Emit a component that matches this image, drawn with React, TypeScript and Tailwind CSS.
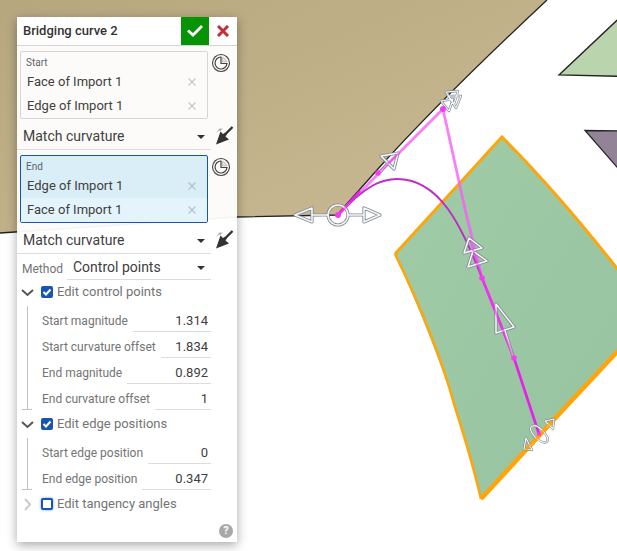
import { useState } from "react";
import type { ReactNode } from "react";

function Viewport() {
  return (
    <svg className="absolute inset-0 size-full" aria-hidden="true" fill="none">
      <defs>
        <linearGradient id="tan" x1="0" y1="0" x2="1" y2="1">
          <stop offset="0" stopColor="#b6a77f" />
          <stop offset="1" stopColor="#cabb94" />
        </linearGradient>
        <linearGradient id="green" x1="0" y1="0" x2="1" y2="1">
          <stop offset="0" stopColor="#9fcca7" />
          <stop offset="1" stopColor="#98c2a0" />
        </linearGradient>
      </defs>
      <path d="M0 0H547Q440 100 377 170L337 215L237 217L0 233Z" fill="url(#tan)" />
      <path d="M547 0Q440 100 377 170L337 215L237 217L0 233" stroke="#222" strokeWidth="1.3" />
      <path d="M630 8L559 75L630 76.500Z" fill="#bad5ae" stroke="#222" strokeWidth="1.3" />
      <path d="M630 131L585 130.500L630 182Z" fill="#938396" stroke="#222" strokeWidth="1.3" />
      <path d="M502 137Q562 197 630 285V338L548 426L481 499Q461 404 395 254Z" fill="url(#green)" />
      <path d="M395 254L502 137Q562 197 630 285" stroke="#ffa50a" strokeWidth="3" />
      <path d="M395 254Q436 338 454 404Q472 460 481 499" stroke="#ffa50a" strokeWidth="2.500" />
      <path d="M630 338L548 426L481 499" stroke="#ffa50a" strokeWidth="4.500" />

      <path d="M338 215L379 173L443 109L465 209L482 278" stroke="#f95cf9" strokeOpacity=".8" strokeWidth="2.800" />
      <path d="M338 215C366 185 382 179 397 179C439 179 461 224 482 278" stroke="#c12bc6" strokeWidth="2" />
      <path d="M482 278L514 358L539 434" stroke="#ea1eea" strokeWidth="2.600" />
      <path d="M338 215L360 191" stroke="#e52ae5" strokeWidth="2.500" />
      <Manipulators className="stroke-[#828b95]" width={3.2} />
      <Manipulators className="stroke-[#f8f9fa]" width={1.5} />
      <path d="M338 215L350 203M482 278L514 358M380 171L399 153M470 240L482 278" stroke="#f53cf5" strokeOpacity=".6" strokeWidth="2.200" />
      <path d="M526 450L552 422" stroke="#ffa50a" strokeOpacity=".75" strokeWidth="3" />
      <g fill="#f53cf5">
        <circle cx="338" cy="215" r="3" />
        <circle cx="378" cy="173" r="2.800" />
        <circle cx="443" cy="109" r="3" />
        <circle cx="482" cy="278" r="2.800" />
        <circle cx="514" cy="358" r="2.800" />
        <circle cx="539" cy="434" r="2" />
      </g>
    </svg>
  );
}

function Manipulators({ className, width }: { className: string; width: number }) {
  return (
    <g className={className} strokeWidth={width} strokeLinejoin="round">
      <circle cx="338" cy="215" r="10" />
      <path d="M328 215H312M312 208V222L295 215ZM348 215H364M364 208V222L380 215Z" />
      <path d="M381 156L398 153L394 169ZM380 172L388 163" />
      <path d="M446 92L458 91L454 104ZM448 96L461 96L456 108ZM441 101L453 99L449 111Z" strokeWidth={width * 0.75} />
      <path d="M469 238L464 253L482 248ZM473 251L468 267L487 261Z" />
      <path d="M496 304L496 333L514 327ZM505 331L513 356" />
      <path d="M531 427Q535 423 542 430Q550 438 547 442Q542 444 535 437Q529 430 531 427Z" strokeWidth={width * 0.75} />
      <path d="M545 421L554 419L553 429ZM526 438L524 449L532 450ZM534 443L529 447M546 428L550 424" strokeWidth={width * 0.75} />
    </g>
  );
}

function ClockIcon() {
  return (
    <svg width="20" height="20" viewBox="0 0 20 20" fill="none" stroke="#444">
      <circle cx="10" cy="10" r="8.500" strokeWidth="1.100" />
      <path d="M10 4A6 6 0 1 0 16 10.500H10Z" strokeWidth="1.200" />
      <path d="M11.500 4.200A6 6 0 0 1 15.800 9H11.500Z" fill="#e2e2e2" stroke="#aaa" strokeWidth=".6" />
    </svg>
  );
}

function FlipIcon() {
  return (
    <svg width="20" height="20" viewBox="0 0 20 20">
      <path d="M2 8L6 3L7 4L9 3L6.500 6L5.500 5.500Z" fill="#aaa" />
      <path d="M18.500 2L11 9.500" stroke="#333" strokeWidth="2.400" />
      <path d="M2 19.500L6.500 6.500L9 9L11 7.800L12.800 9.600L11.500 11.500L15 14.500Z" fill="#333" />
    </svg>
  );
}

function Selection({ label, items, active }: { label: string; items: string[]; active?: boolean }) {
  return (
    <div className="flex gap-1 pl-[3px]">
      <section
        aria-label={label}
        className={`w-[188px] rounded-xs border ${active ? "border-[#1855b2] bg-[#daeef7]" : "border-[#d6d6d4]"}`}
      >
        <h2 className="h-[18px] px-[5px] pt-1 text-[10px] leading-[14px] text-[#5d6469]">{label}</h2>
        <ul>
          {items.map((item, i) => (
            <li
              key={item}
              className={`flex h-6 items-center justify-between pr-2.5 pl-1.5 text-[13px] ${active && i > 0 ? "bg-[#e4f4fc]" : ""}`}
            >
              <span>{item}</span>
              <button type="button" aria-label={`Remove ${item}`} className={active ? "text-[#b4c4cc]" : "text-[#c8c8c8]"}>
                <svg width="10" height="10" viewBox="0 0 10 10" stroke="currentColor" strokeWidth="1.300">
                  <path d="M1.500 1.500L8.500 8.500M8.500 1.500L1.500 8.500" />
                </svg>
              </button>
            </li>
          ))}
        </ul>
      </section>
      <button type="button" aria-label={`${label} history`} className="mt-0.5 -ml-px size-5">
        <ClockIcon />
      </button>
    </div>
  );
}

function Dropdown({ label, options }: { label: string; options: string[] }) {
  return (
    <div className="relative flex-1 border-b border-[#dcdcdc]">
      <select aria-label={label} className="size-full appearance-none bg-transparent px-1.5 outline-none">
        {options.map((o) => (
          <option key={o}>{o}</option>
        ))}
      </select>
      <svg className="pointer-events-none absolute top-1/2 right-1.5 -mt-px" width="8" height="4" viewBox="0 0 8 4">
        <path d="M0 0H8L4 4Z" fill="#333" />
      </svg>
    </div>
  );
}

function MatchRow({ label }: { label: string }) {
  return (
    <div className="flex h-[31px] pt-[3px] pr-[3px]">
      <Dropdown label={label} options={["Match curvature", "Match tangent", "Match position"]} />
      <button type="button" aria-label={`${label} flip`} className="mt-[3px] ml-[3px] size-5">
        <FlipIcon />
      </button>
    </div>
  );
}

function Group({ id, label, initial, children }: { id: string; label: string; initial: boolean; children?: ReactNode }) {
  const [on, setOn] = useState(initial);
  return (
    <div>
      <div className="flex h-7 items-center pl-1">
        <svg width="13" height="13" viewBox="0 0 13 13" fill="none" strokeWidth="2" className={on ? "stroke-[#555]" : "stroke-[#ccc]"}>
          <path d={on ? "M1 4L6.500 9L12 4" : "M4 1L9 6.500L4 12"} />
        </svg>
        <span className="relative ml-[7px] size-3">
          <input
            id={id}
            type="checkbox"
            checked={on}
            onChange={() => setOn(!on)}
            className="block size-3 appearance-none rounded-xs border-2 border-[#1855b2] bg-white not-checked:shadow-[0_0_3px_#73a2ed] checked:bg-[#1855b2]"
          />
          {on && (
            <svg className="pointer-events-none absolute inset-0" width="12" height="12" viewBox="0 0 12 12" fill="none" stroke="#fff" strokeWidth="2">
              <path d="M2.500 6L5 8.500L9.500 3.500" />
            </svg>
          )}
        </span>
        <label htmlFor={id} className="ml-1 text-[13px] text-[#747474]">{label}</label>
      </div>
      {on && children}
    </div>
  );
}

function Fields({ rows }: { rows: [string, string][] }) {
  return (
    <div className="flex pl-[5px]">
      <div className="flex w-2.5 justify-center border-b border-[#c2c2c2]">
        <div className="w-px bg-[#c2c2c2]" />
      </div>
      <div className="flex-1 pr-[26px] pl-2.5">
        {rows.map(([label, value]) => (
          <div key={label} className="flex h-[26px] gap-[5px]">
            <label htmlFor={label} className="pt-1 text-xs leading-[22px] text-[#747474]">{label}</label>
            <input
              id={label}
              defaultValue={value}
              className="w-0 flex-1 border-b border-[#dcdcdc] bg-transparent pt-[5px] pr-[3px] text-right text-[13px] outline-none"
            />
          </div>
        ))}
      </div>
    </div>
  );
}

export default function App() {
  return (
    <main className="relative min-h-screen overflow-hidden bg-white p-[17px] pb-2 font-[Roboto,sans-serif] text-sm text-[#404040]">
      <Viewport />
      <form className="relative w-[220px] bg-white/95 pb-0.5 shadow-[0_3px_10px_rgba(0,0,0,0.35)]">
        <header className="flex h-[29px] items-stretch border-b border-[#d4d4d4] bg-white">
          <h1 className="flex-1 pl-1.5 text-[13px] leading-7 font-medium text-[#333]">Bridging curve 2</h1>
          <button type="button" aria-label="Accept" className="flex w-7 items-center justify-center bg-[#069306]">
            <svg width="16" height="12" viewBox="0 0 16 12" fill="none" stroke="#fff" strokeWidth="2.800">
              <path d="M1 5.500L6 10L15 1" />
            </svg>
          </button>
          <button type="button" aria-label="Cancel" className="flex w-7 items-center justify-center">
            <svg width="12" height="12" viewBox="0 0 12 12" stroke="#c62d35" strokeWidth="3">
              <path d="M1 1L11 11M11 1L1 11" />
            </svg>
          </button>
        </header>
        <div className="pt-[5px]">
          <Selection label="Start" items={["Face of Import 1", "Edge of Import 1"]} />
          <MatchRow label="Start condition" />
        </div>
        <div className="pt-[5px]">
          <Selection label="End" items={["Edge of Import 1", "Face of Import 1"]} active />
          <MatchRow label="End condition" />
        </div>
        <div className="flex h-[26px] pr-[26px] pl-[5px]">
          <span className="w-[45px] pt-1 text-xs leading-[22px] text-[#747474]">Method</span>
          <Dropdown label="Method" options={["Control points", "Magnitude"]} />
        </div>
        <div className="-mt-0.5">
          <Group id="control-points" label="Edit control points" initial>
            <Fields
              rows={[
                ["Start magnitude", "1.314"],
                ["Start curvature offset", "1.834"],
                ["End magnitude", "0.892"],
                ["End curvature offset", "1"],
              ]}
            />
          </Group>
          <Group id="edge-positions" label="Edit edge positions" initial>
            <Fields
              rows={[
                ["Start edge position", "0"],
                ["End edge position", "0.347"],
              ]}
            />
          </Group>
          <Group id="tangency" label="Edit tangency angles" initial={false} />
        </div>
        <footer className="flex justify-end pt-1 pr-1">
          <button type="button" aria-label="Help" className="my-0.5 flex size-3.5 items-center justify-center rounded-full bg-[#a8a8a8] text-[11px] font-bold text-white">
            ?
          </button>
        </footer>
      </form>
    </main>
  );
}
